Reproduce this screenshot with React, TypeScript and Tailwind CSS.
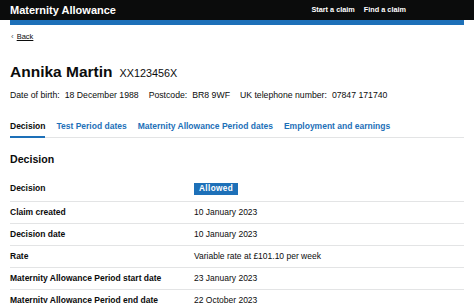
import React from 'react';

type Row = {
  label: string;
  value: React.ReactNode;
};

const rows: Row[] = [
  {
    label: 'Decision',
    value: (
      <span className="inline-block bg-[#1d70b8] px-[5px] py-px text-[8.2px] leading-[10px] font-bold tracking-[0.4px] text-white -mt-px">
        Allowed
      </span>
    ),
  },
  { label: 'Claim created', value: '10 January 2023' },
  { label: 'Decision date', value: '10 January 2023' },
  { label: 'Rate', value: 'Variable rate at £101.10 per week' },
  { label: 'Maternity Allowance Period start date', value: '23 January 2023' },
  { label: 'Maternity Allowance Period end date', value: '22 October 2023' },
];

const tabs = [
  'Decision',
  'Test Period dates',
  'Maternity Allowance Period dates',
  'Employment and earnings',
];

const App: React.FC = () => {
  return (
    <div
      className="min-h-screen bg-white text-[#0b0c0c]"
      style={{ fontFamily: '"Liberation Sans", Arial, sans-serif' }}
    >
      <header className="bg-[#0b0c0c]">
        <div className="h-[20px] px-[10px] flex items-center justify-between">
          <span className="text-[11px] leading-[13px] font-bold text-white">
            Maternity Allowance
          </span>
          <nav className="flex gap-[9px] pr-[58px] text-[7.3px] leading-[10px] font-bold text-white">
            <a>Start a claim</a>
            <a>Find a claim</a>
          </nav>
        </div>
      </header>
      <div className="bg-white">
        <div className="mx-[10px] h-[5px] bg-[#1d70b8]"></div>
      </div>

      <main className="px-[10px]">
        <div className="mt-[7px] flex items-center gap-[3px] text-[7.5px] leading-[10px]">
          <span className="text-[#505a5f] text-[8px] pl-px">&lsaquo;</span>
          <a className="underline">Back</a>
        </div>

        <h1 className="mt-[21px] flex items-baseline gap-[7px]">
          <span className="text-[15.5px] leading-[18px] font-bold">Annika Martin</span>
          <span className="text-[10.8px] leading-[18px]">XX123456X</span>
        </h1>

        <div className="mt-[8px] flex gap-[10px] text-[8.7px] leading-[10px]">
          <span className="flex gap-[5px]">
            <span>Date of birth:</span>
            <span>18 December 1988</span>
          </span>
          <span className="flex gap-[5px]">
            <span>Postcode:</span>
            <span>BR8 9WF</span>
          </span>
          <span className="flex gap-[5px]">
            <span>UK telephone number:</span>
            <span>07847 171740</span>
          </span>
        </div>

        <div className="mt-[21px] flex gap-[11px] border-b border-[#e3e4e5]">
          {tabs.map((tab, i) => (
            <a
              key={tab}
              className={
                i === 0
                  ? 'pb-[5px] -mb-px border-b-2 border-[#1d70b8] text-[8.5px] leading-[10px] font-bold text-[#0b0c0c]'
                  : 'pb-[6px] text-[8.5px] leading-[10px] font-bold text-[#1d70b8]'
              }
            >
              {tab}
            </a>
          ))}
        </div>

        <h2 className="mt-[15px] text-[10.6px] leading-[13px] font-bold">Decision</h2>

        <dl className="mt-[12px]">
          {rows.map((row) => (
            <div key={row.label} className="flex border-b border-[#e3e4e5] pt-[5px] pb-[6px]">
              <dt className="w-[184px] text-[8.5px] leading-[10px] font-bold">{row.label}</dt>
              <dd className="text-[8.5px] leading-[10px]">{row.value}</dd>
            </div>
          ))}
        </dl>
      </main>
    </div>
  );
};

export default App;
